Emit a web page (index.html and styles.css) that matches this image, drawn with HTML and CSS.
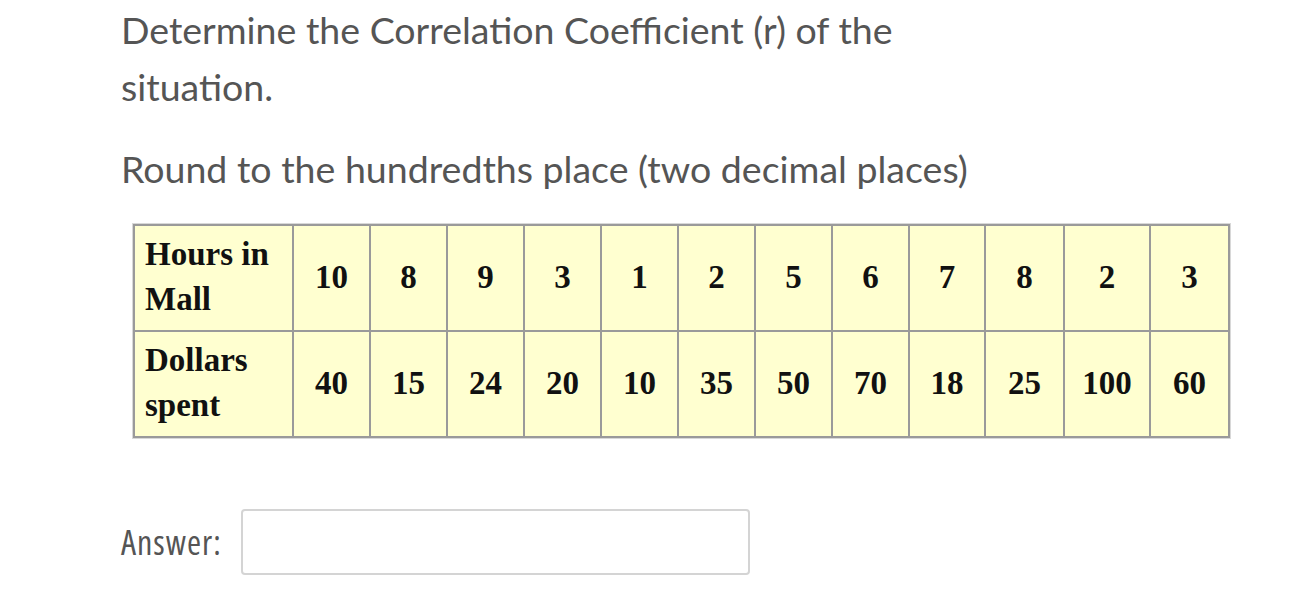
FILE: index.html
```html
<!DOCTYPE html>
<html>
<head>
<meta charset="utf-8">
<link rel="stylesheet" href="styles.css">
</head>
<body>
<div class="page">
  <p class="q first">Determine the Correlation Coefficient (r) of the<br>situation.</p>
  <p class="q">Round to the hundredths place (two decimal places)</p>
  <table class="data">
    <colgroup>
      <col class="c-head"><col class="c-n"><col class="c-n"><col class="c-n"><col class="c-n"><col class="c-n"><col class="c-n"><col class="c-n"><col class="c-n"><col class="c-n76"><col class="c-n79"><col class="c-n86"><col class="c-n79">
    </colgroup>
    <tr>
      <th>Hours in<br>Mall</th>
      <td>10</td><td>8</td><td>9</td><td>3</td><td>1</td><td>2</td><td>5</td><td>6</td><td>7</td><td>8</td><td>2</td><td>3</td>
    </tr>
    <tr>
      <th>Dollars<br>spent</th>
      <td>40</td><td>15</td><td>24</td><td>20</td><td>10</td><td>35</td><td>50</td><td>70</td><td>18</td><td>25</td><td>100</td><td>60</td>
    </tr>
  </table>
  <div class="answer">
    <span class="label">Answer:</span>
    <input class="box" type="text">
  </div>
</div>
</body>
</html>
```

FILE: styles.css
```css
html, body {
  margin: 0;
  padding: 0;
  background: #ffffff;
}
.page {
  padding-left: 121px;
  padding-top: 1px;
  font-family: "Lato", "Open Sans", sans-serif;
  color: #555555;
}
.q {
  margin: 0 0 25px 0;
  font-size: 37.5px;
  line-height: 57px;
  font-variant-ligatures: common-ligatures;
}
.data {
  margin: 27px 0 0 12px;
  border-collapse: collapse;
  table-layout: fixed;
  width: 1095px;
  border: 2px solid #9a9a9a;
  box-shadow: 0 0 0 1px #d8d8d8;
  font-family: "Liberation Serif", "Times New Roman", serif;
  font-weight: bold;
  font-size: 33px;
  line-height: 45px;
  color: #111111;
}
.c-head { width: 159px; }
.c-n { width: 77px; }
.c-n76 { width: 76px; }
.c-n79 { width: 79px; }
.c-n86 { width: 86px; }
.data th, .data td {
  background: #ffffd0;
  border: 2px solid #9a9a9a;
  padding: 6px 4px 8px 10px;
  height: 90px;
  box-sizing: content-box;
}
.data th {
  text-align: left;
  font-weight: bold;
}
.data td {
  text-align: center;
  padding: 6px 2px 8px 2px;
}
.answer {
  display: flex;
  align-items: center;
  margin-top: 71px;
  gap: 19px;
}
.label {
  font-family: "Open Sans", sans-serif;
  font-stretch: condensed;
  font-size: 34px;
  letter-spacing: 1px;
  color: #555555;
}
.box {
  width: 509px;
  height: 66px;
  box-sizing: border-box;
  border: 2px solid #d4d4d4;
  border-radius: 4px;
  background: #ffffff;
  margin: 0;
  padding: 0;
  outline: none;
}
```
